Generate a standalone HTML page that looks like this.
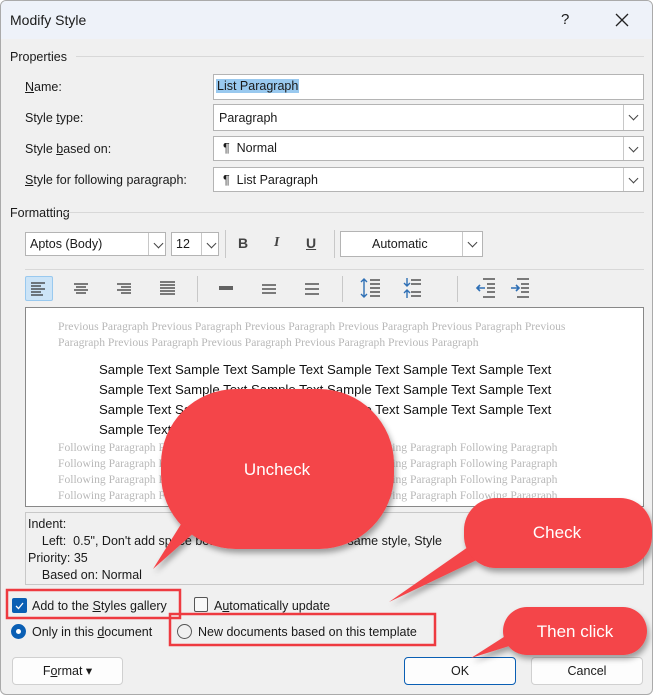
<!DOCTYPE html>
<html><head><style>
*{box-sizing:border-box;margin:0;padding:0}
body{width:653px;height:695px;background:#fff;font-family:"Liberation Sans",sans-serif;font-size:12.5px;color:#1a1a1a;position:relative;overflow:hidden}
.a{position:absolute}
.win{left:0;top:0;width:653px;height:695px;background:#f0f0f0;border:1px solid #aaa;border-radius:6px;overflow:hidden}
.title{left:0;top:0;width:653px;height:38px;background:#eef2f9}
.box{background:#fff;border:1px solid #b4b4b4}
.dd{border-left:1px solid #c8c8c8;width:20px;top:0;bottom:0;right:0;background:#fff}
.dd:after{content:"";position:absolute;left:6px;top:7px;width:6px;height:6px;border-right:1px solid #444;border-bottom:1px solid #444;transform:rotate(45deg)}
.line{height:1px;background:#d8d8d8}
.sep{width:1px;background:#c8c8c8}
.pv{font-family:"Liberation Serif",serif;font-size:11.6px;color:#b8b8b8}
.st{font-size:13.2px;color:#111}
.btn{background:#fdfdfd;border:1px solid #d0d0d0;border-radius:4px;text-align:center;line-height:26px;font-size:12.5px}
.ic{stroke:#333;stroke-width:1.2}
</style></head><body>
<div class="a win">
<div class="a title"></div>
<div class="a" style="left:9px;top:11px;font-size:14px">Modify Style</div>
<div class="a" style="left:560px;top:10px;font-size:15px">?</div>
<svg class="a" style="left:614px;top:12px" width="14" height="14"><path d="M1 1L13 13M13 1L1 13" stroke="#222" stroke-width="1.3"/></svg>

<div class="a" style="left:9px;top:49px">Properties</div>
<div class="a line" style="left:75px;top:55px;width:568px"></div>
<div class="a" style="left:24px;top:79px"><u>N</u>ame:</div>
<div class="a" style="left:24px;top:110px">Style <u>t</u>ype:</div>
<div class="a" style="left:24px;top:141px">Style <u>b</u>ased on:</div>
<div class="a" style="left:24px;top:172px"><u>S</u>tyle for following paragraph:</div>
<div class="a box" style="left:212px;top:73px;width:431px;height:26px"><span class="a" style="left:2px;top:4px;background:#99c9ef;padding:0 1px">List Paragraph</span></div>
<div class="a box" style="left:212px;top:103px;width:431px;height:27px"><span class="a" style="left:5px;top:6px">Paragraph</span><div class="a dd"></div></div>
<div class="a box" style="left:212px;top:135px;width:431px;height:25px"><span class="a" style="left:9px;top:4px">¶&nbsp; Normal</span><div class="a dd"></div></div>
<div class="a box" style="left:212px;top:166px;width:431px;height:25px"><span class="a" style="left:9px;top:5px">¶&nbsp; List Paragraph</span><div class="a dd"></div></div>

<div class="a" style="left:9px;top:205px">Formatting</div>
<div class="a line" style="left:62px;top:211px;width:581px"></div>
<div class="a box" style="left:24px;top:231px;width:141px;height:24px"><span class="a" style="left:4px;top:4px">Aptos (Body)</span><div class="a dd" style="width:17px"></div></div>
<div class="a box" style="left:170px;top:231px;width:48px;height:24px"><span class="a" style="left:4px;top:4px">12</span><div class="a dd" style="width:17px"></div></div>
<div class="a sep" style="left:224px;top:229px;height:28px"></div>
<div class="a" style="left:237px;top:234px;font-weight:bold;font-size:14px;color:#444">B</div>
<div class="a" style="left:273px;top:234px;font-style:italic;font-weight:bold;font-size:14px;color:#444;font-family:'Liberation Serif',serif">I</div>
<div class="a" style="left:305px;top:234px;font-weight:bold;font-size:14px;color:#444;text-decoration:underline">U</div>
<div class="a sep" style="left:333px;top:229px;height:28px"></div>
<div class="a box" style="left:339px;top:230px;width:143px;height:26px"><span class="a" style="left:31px;top:5px">Automatic</span><div class="a dd"></div></div>
<div class="a line" style="left:24px;top:268px;width:619px"></div>
<div class="a" style="left:24px;top:275px;width:28px;height:25px;background:#cce4f7;border:1px solid #99c9ef;border-radius:2px"></div>
<svg class="a" style="left:0;top:275px" width="560" height="26">
<g class="ic" fill="none">
<path d="M30 7h14M30 10h10M30 13h14M30 16h10M30 19h12"/>
<path d="M73 8h14M75 11h10M73 14h14M75 17h10"/>
<path d="M116 8h14M120 11h10M116 14h14M120 17h10"/>
<path d="M159 6h15M159 9h15M159 12h15M159 15h15M159 18h15"/>
<path d="M218 11h14M218 13h14" stroke-width="1.5"/>
<path d="M261 9h14M261 13h14M261 17h14"/>
<path d="M304 8h14M304 13h14M304 18h14"/>
<path d="M369 4h10M369 8h10M369 12h10M369 16h10M369 20h10"/>
<path d="M410 4h10M410 8h10M410 16h10M410 20h10"/>
<path d="M482 3h12M486 8h8M486 12h8M486 16h8M482 21h12"/>
<path d="M516 3h12M520 8h8M520 12h8M520 16h8M516 21h12"/>
</g>
<path d="M363 3v18M360 6l3-3 3 3M360 18l3 3 3-3" stroke="#2e6fb5" stroke-width="1.4" fill="none"/>
<path d="M406 2v8M403 7l3 3 3-3M406 22v-8M403 17l3-3 3 3" stroke="#2e6fb5" stroke-width="1.4" fill="none"/>
<path d="M476 12h8M479 9l-3 3 3 3" stroke="#2e6fb5" stroke-width="1.6" fill="none"/>
<path d="M510 12h8M515 9l3 3-3 3" stroke="#2e6fb5" stroke-width="1.6" fill="none"/>
</svg>
<div class="a sep" style="left:196px;top:275px;height:26px"></div>
<div class="a sep" style="left:341px;top:275px;height:26px"></div>
<div class="a sep" style="left:456px;top:275px;height:26px"></div>

<div class="a box" style="left:24px;top:306px;width:619px;height:200px;border-color:#888"></div>
<div class="a pv" style="left:57px;top:318px;line-height:16px;white-space:nowrap">Previous Paragraph Previous Paragraph Previous Paragraph Previous Paragraph Previous Paragraph Previous<br>Paragraph Previous Paragraph Previous Paragraph Previous Paragraph Previous Paragraph</div>
<div class="a st" style="left:98px;top:359px;line-height:20px;white-space:nowrap">Sample Text Sample Text Sample Text Sample Text Sample Text Sample Text<br>Sample Text Sample Text Sample Text Sample Text Sample Text Sample Text<br>Sample Text Sample Text Sample Text Sample Text Sample Text Sample Text<br>Sample Text</div>
<div class="a pv" style="left:57px;top:439px;line-height:16px;white-space:nowrap">Following Paragraph Following Paragraph Following Paragraph Following Paragraph Following Paragraph<br>Following Paragraph Following Paragraph Following Paragraph Following Paragraph Following Paragraph<br>Following Paragraph Following Paragraph Following Paragraph Following Paragraph Following Paragraph<br>Following Paragraph Following Paragraph Following Paragraph Following Paragraph Following Paragraph</div>

<div class="a" style="left:24px;top:511px;width:619px;height:73px;border:1px solid #c8c8c8"></div>
<div class="a" style="left:27px;top:515px;line-height:17px;white-space:nowrap">Indent:<br>&nbsp;&nbsp;&nbsp;&nbsp;Left:&nbsp; 0.5", Don't add space between paragraphs of the same style, Style<br>Priority: 35<br>&nbsp;&nbsp;&nbsp;&nbsp;Based on: Normal</div>

<div class="a" style="left:11px;top:597px;width:15px;height:15px;background:#0a5fb4;border-radius:2px"></div>
<svg class="a" style="left:11px;top:597px" width="15" height="15"><path d="M4 8l2.5 2.5L11 5" stroke="#fff" stroke-width="1.3" fill="none"/></svg>
<div class="a" style="left:31px;top:598px">Add to the <u>S</u>tyles gallery</div>
<div class="a" style="left:193px;top:596px;width:14px;height:15px;border:1px solid #555;border-radius:2px;background:#f8f8f8"></div>
<div class="a" style="left:213px;top:598px">A<u>u</u>tomatically update</div>
<div class="a" style="left:10px;top:623px;width:15px;height:15px;border-radius:50%;background:#0a5fb4"></div>
<div class="a" style="left:15px;top:628px;width:5px;height:5px;border-radius:50%;background:#fff"></div>
<div class="a" style="left:31px;top:624px">Only in this <u>d</u>ocument</div>
<div class="a" style="left:176px;top:623px;width:15px;height:15px;border-radius:50%;border:1px solid #555"></div>
<div class="a" style="left:197px;top:624px">New documents based on this template</div>

<div class="a btn" style="left:11px;top:656px;width:111px;height:28px">F<u>o</u>rmat ▾</div>
<div class="a btn" style="left:403px;top:656px;width:112px;height:28px;border:1px solid #0a5fb4">OK</div>
<div class="a btn" style="left:530px;top:656px;width:112px;height:28px">Cancel</div>

<svg class="a" style="left:0;top:0" width="653" height="695">
<defs><filter id="sh" x="-20%" y="-20%" width="140%" height="140%"><feDropShadow dx="2" dy="4" stdDeviation="3" flood-color="#000" flood-opacity="0.35"/></filter></defs>
<g fill="#f44448" filter="url(#sh)">
<path d="M195 530 L152 568 L182 520 Z"/>
<rect x="160" y="388" width="233" height="160" rx="75"/>
<path d="M505 545 L388 601 L490 530 Z"/>
<rect x="463" y="497" width="188" height="70" rx="32"/>
<path d="M540 635 L470 657 L520 625 Z"/>
<rect x="502" y="606" width="144" height="48" rx="24"/>
</g>
<g fill="#fff" font-family="Liberation Sans,sans-serif" font-size="17" text-anchor="middle">
<text x="276" y="474">Uncheck</text>
<text x="556" y="537">Check</text>
<text x="574" y="636">Then click</text>
</g>
<g fill="none" stroke="#ee3a40" stroke-width="2.5">
<rect x="6" y="589" width="173" height="28"/>
<rect x="169" y="613" width="265" height="31"/>
</g>
</svg>
</div>
</body></html>
